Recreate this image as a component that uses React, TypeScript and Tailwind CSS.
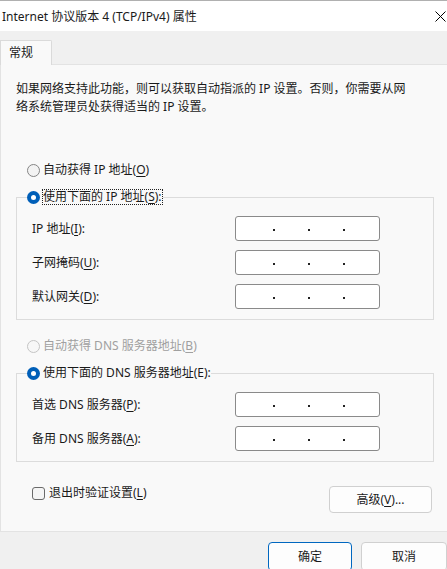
import React from "react";

function U({ c }: { c: string }) {
  return <span className="underline underline-offset-[2px] decoration-[1px]">{c}</span>;
}

function Radio({ checked, disabled }: { checked?: boolean; disabled?: boolean }) {
  if (checked) {
    return (
      <span className="w-[13px] h-[13px] rounded-full bg-[#005fb8] flex items-center justify-center shrink-0">
        <span className="w-[5px] h-[5px] rounded-full bg-white" />
      </span>
    );
  }
  return (
    <span
      className={
        disabled
          ? "w-[13px] h-[13px] rounded-full border border-[#c4c4c4] bg-[#f7f7f7] shrink-0"
          : "w-[13px] h-[13px] rounded-full border border-[#858585] bg-[#f3f3f3] shrink-0"
      }
    />
  );
}

function IpBox() {
  return (
    <div className="w-[145px] h-[25px] bg-white border border-[#8a8a8a] rounded-[3px] flex items-center">
      <span className="ml-[37px] mt-[3px] w-[2px] h-[2px] bg-[#222]" />
      <span className="ml-[33px] mt-[3px] w-[2px] h-[2px] bg-[#222]" />
      <span className="ml-[33px] mt-[3px] w-[2px] h-[2px] bg-[#222]" />
    </div>
  );
}

function Row({ label }: { label: React.ReactNode }) {
  return (
    <div className="flex items-center h-[25px]">
      <div className="w-[203px] leading-[16px]">{label}</div>
      <IpBox />
    </div>
  );
}

export default function App() {
  return (
    <div className="w-[447px] h-[569px] overflow-hidden bg-[#f0f0f0] font-['Noto_Sans','Noto_Sans_CJK_SC',sans-serif] text-[12px] text-[#1a1a1a] flex flex-col">
      {/* title bar */}
      <div className="h-[31px] shrink-0 bg-white border-t border-[#b0b0b0] flex items-center justify-between pl-[2px]">
        <span className="leading-[16px] mt-[1px]">Internet 协议版本 4 (TCP/IPv4) 属性</span>
        <svg width="11" height="11" viewBox="0 0 11 11" className="mr-[1px] mt-[1px]">
          <path d="M0.5 0.5 L10.5 10.5 M10.5 0.5 L0.5 10.5" stroke="#000" strokeWidth="1" fill="none" />
        </svg>
      </div>

      {/* tab strip */}
      <div className="pt-[9px] flex shrink-0">
        <div className="relative z-10 -mb-px h-[25px] w-[52px] bg-[#f9f9f9] border border-b-0 border-[#dadada] rounded-tr-[2px] pl-[8px] flex items-center leading-[16px]">
          常规
        </div>
      </div>

      {/* panel */}
      <div className="h-[468px] shrink-0 bg-[#f9f9f9] border border-r-0 border-[#e3e3e3] pl-[15px] flex flex-col">
        <p className="mt-[15px] leading-[18px] whitespace-nowrap">
          如果网络支持此功能，则可以获取自动指派的 IP 设置。否则，你需要从网
          <br />
          络系统管理员处获得适当的 IP 设置。
        </p>

        <label className="mt-[46px] ml-[11px] flex items-center gap-[3px] h-[16px] leading-[16px]">
          <Radio />
          <span>
            自动获得 IP 地址(<U c="O" />)
          </span>
        </label>

        <fieldset className="mt-[11px] w-[418px] border border-[#dcdcdc] p-0 m-0 min-w-0">
          <legend className="ml-[10px] p-0">
            <span className="flex items-center gap-[2px] h-[16px] leading-[14px]">
              <Radio checked />
              <span className="border border-dotted border-[#222] px-[0px] h-[16px] flex items-center">
                使用下面的 IP 地址(<U c="S" />):
              </span>
            </span>
          </legend>
          <div className="pt-[11px] pb-[10px] pl-[15px] flex flex-col gap-[9px]">
            <Row label={<>IP 地址(<U c="I" />):</>} />
            <Row label={<>子网掩码(<U c="U" />):</>} />
            <Row label={<>默认网关(<U c="D" />):</>} />
          </div>
        </fieldset>

        <label className="mt-[18px] ml-[11px] flex items-center gap-[3px] h-[16px] leading-[16px] text-[#a0a0a0]">
          <Radio disabled />
          <span>
            自动获得 DNS 服务器地址(<U c="B" />)
          </span>
        </label>

        <fieldset className="mt-[11px] w-[418px] border border-[#dcdcdc] p-0 m-0 min-w-0">
          <legend className="ml-[10px] p-0">
            <span className="flex items-center gap-[3px] h-[16px] leading-[16px]">
              <Radio checked />
              <span>使用下面的 DNS 服务器地址(E):</span>
            </span>
          </legend>
          <div className="pt-[11px] pb-[10px] pl-[15px] flex flex-col gap-[9px]">
            <Row label={<>首选 DNS 服务器(<U c="P" />):</>} />
            <Row label={<>备用 DNS 服务器(<U c="A" />):</>} />
          </div>
        </fieldset>

        <div className="mt-[24px] w-[418px] flex items-start justify-between pl-[16px] pr-[2px]">
          <label className="flex items-center gap-[4px] h-[16px] leading-[16px] -mt-[1px]">
            <span className="w-[13px] h-[13px] rounded-[3px] border border-[#6a6a6a] bg-[#f5f5f5]" />
            <span>
              退出时验证设置(<U c="L" />)
            </span>
          </label>
          <button className="w-[103px] h-[27px] rounded-[4px] border border-[#d0d0d0] bg-[#fdfdfd] flex items-center justify-center leading-[16px]">
            高级(<U c="V" />)...
          </button>
        </div>
      </div>

      {/* footer */}
      <div className="pt-[10px] flex pl-[268px] gap-[9px]">
        <button className="w-[86px] h-[29px] rounded-[4px] border border-[#0067c0] bg-[#fdfdfd] flex items-center justify-center leading-[16px]">
          确定
        </button>
        <button className="w-[86px] h-[29px] shrink-0 rounded-[4px] border border-[#d0d0d0] bg-[#fdfdfd] flex items-center justify-center leading-[16px]">
          取消
        </button>
      </div>
    </div>
  );
}
